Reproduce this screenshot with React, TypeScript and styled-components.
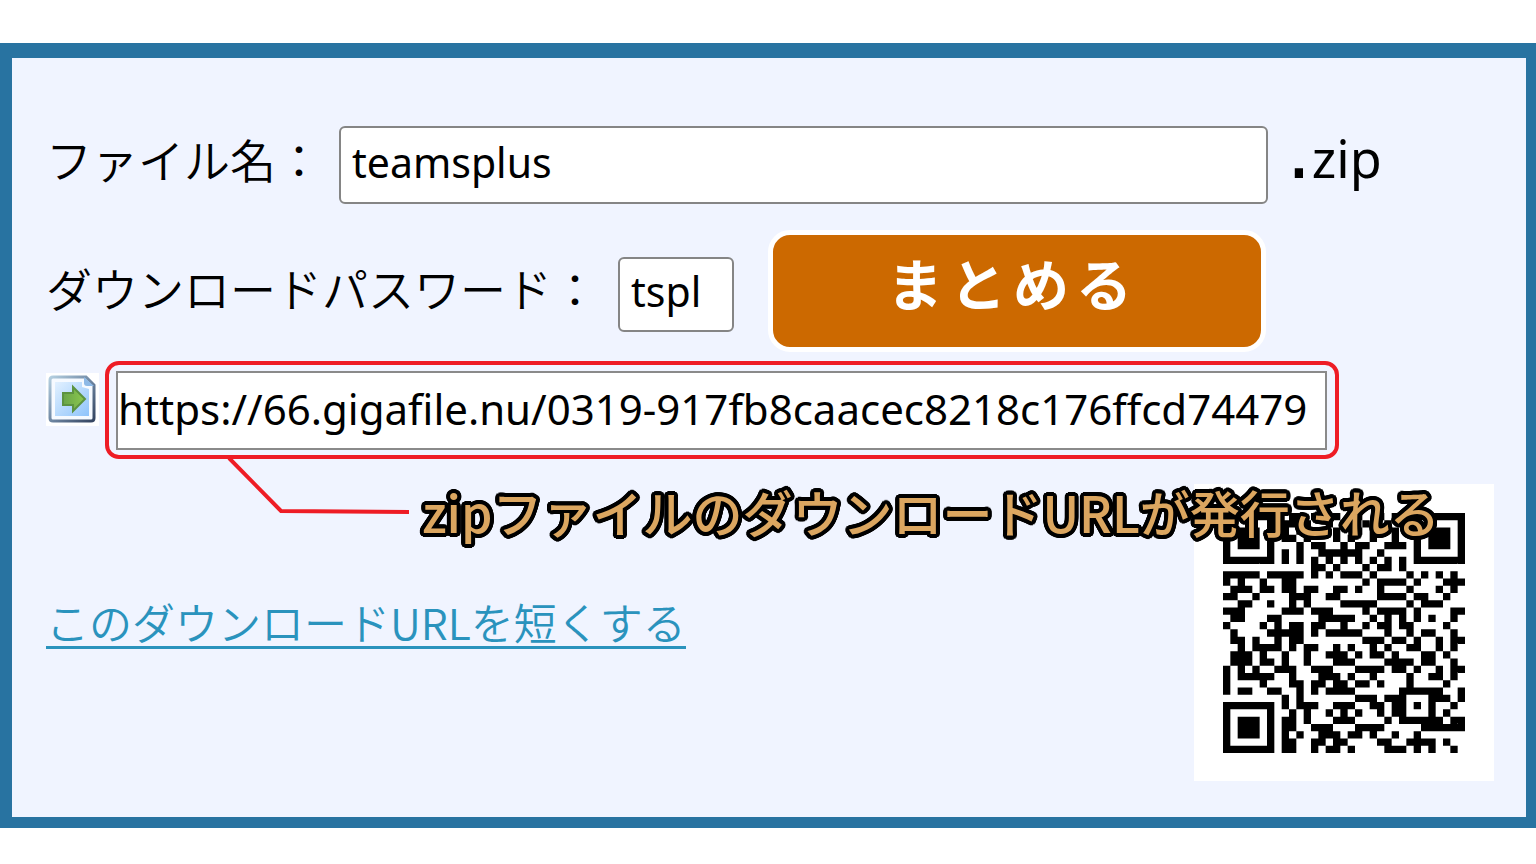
import React from "react";
import styled, { createGlobalStyle } from "styled-components";

const GlobalStyle = createGlobalStyle`
  * { box-sizing: border-box; }
  body { margin: 0; background: #fff; }
`;

const labelFont = `"Noto Sans CJK JP", sans-serif`;
const fieldFont = `"Noto Sans", "Noto Sans CJK JP", sans-serif`;

const Page = styled.main`
  padding: 43px 0 36px;
  font-family: ${labelFont};
  color: #000;
`;

const Panel = styled.form`
  position: relative;
  min-height: 785px;
  padding: 68px 32px 34px 34px;
  border: solid #2873a1;
  border-width: 15px 10px 11px 12px;
  background: #f0f4ff;
`;

const Row = styled.div<{ $height: number; $top?: number }>`
  display: flex;
  align-items: center;
  height: ${(p) => p.$height}px;
  margin-top: ${(p) => p.$top ?? 0}px;
`;

const Field = styled.div<{ $top?: number }>`
  display: flex;
  align-items: center;
  padding-top: ${(p) => p.$top ?? 0}px;
`;

const Label = styled.label<{ $width: number }>`
  flex: none;
  width: ${(p) => p.$width}px;
  padding-bottom: 14px;
  font: 350 46px/60px ${labelFont};
  white-space: nowrap;
`;

const TextBox = styled.input<{ $width: number; $height: number }>`
  width: ${(p) => p.$width}px;
  height: ${(p) => p.$height}px;
  padding: 0 11px 6px;
  border: 2px solid #858585;
  border-radius: 6px;
  background: #fff;
  color: #000;
  font: 400 41px/60px ${fieldFont};
`;

const Extension = styled.span`
  padding: 0 0 12px 22px;
  font: 400 52px/60px ${fieldFont};
`;

const Dot = styled.b`
  margin-right: 4px;
  font-family: "DejaVu Sans Condensed", sans-serif;
  font-weight: 700;
`;

const SubmitButton = styled.button`
  width: 498px;
  height: 122px;
  margin-left: 34px;
  padding: 0 8px 18px 0;
  border: 5px solid #fff;
  border-radius: 22px;
  background: #cc6900;
  color: #fff;
  font: 700 56px/72px ${labelFont};
  letter-spacing: 7px;
`;

const CopyButton = styled.button`
  align-self: flex-start;
  width: 53px;
  height: 53px;
  margin: 12px 6px 0 0;
  padding: 0;
  border: 0;
  background: #fff;
  svg { display: block; }
`;

const Highlight = styled.div`
  width: 1234px;
  height: 98px;
  padding: 6px 8px 6px 7px;
  border: 4px solid #ee1c25;
  border-radius: 14px;
`;

const UrlBox = styled.input`
  display: block;
  width: 100%;
  height: 79px;
  padding: 0 0 4px;
  border: 2px solid #8a8a8a;
  border-radius: 0;
  background: #fff;
  color: #000;
  font: 400 42px/60px ${fieldFont};
`;

const Lower = styled.div`
  display: flex;
  justify-content: space-between;
  align-items: flex-start;
  margin-top: 25px;
`;

const ShortenLink = styled.a`
  margin-top: 112px;
  border-bottom: 3px solid #2a93bd;
  color: #2a93bd;
  font: 350 43px/50px ${labelFont};
  text-decoration: none;
  white-space: nowrap;
`;

const QrCard = styled.div`
  width: 300px;
  height: 297px;
  padding: 29px;
  background: #fff;
  svg { display: block; }
`;

const Leader = styled.svg`
  position: absolute;
  left: 214px;
  top: 400px;
`;

/* A ring of shadows gives the lettering a round-cornered outline. */
const outline = Array.from({ length: 24 }, (_, i) => {
  const a = (i * Math.PI) / 12;
  return `${(4 * Math.cos(a)).toFixed(2)}px ${(4 * Math.sin(a)).toFixed(2)}px 0 #000`;
}).join(", ");

const Callout = styled.p`
  position: absolute;
  left: 410px;
  top: 417px;
  margin: 0;
  color: #dba660;
  font: 500 50px/72px ${labelFont};
  white-space: nowrap;
  text-shadow: ${outline};
`;

const FINDER = [
  "#######", "#.....#", "#.###.#", "#.###.#", "#.###.#", "#.....#", "#######",
];

/* Dark columns of each row outside the three corner finder squares. */
const QR_ROWS: number[][] = [
  [9, 10, 12, 15, 17, 18, 21, 23],
  [8, 9, 11, 14, 16, 19, 22],
  [8, 10, 12, 13, 15, 18, 20, 23],
  [8, 9, 11, 15, 17, 20, 23],
  [10, 12, 13, 16, 18, 19, 22, 23, 24],
  [8, 10, 13, 14, 15, 16, 17, 18, 21],
  [8, 10, 12, 14, 16, 18, 20, 22, 24],
  [12, 13, 15, 19, 21, 22, 24],
  [0, 1, 2, 3, 4, 6, 7, 8, 9, 10, 12, 14, 16, 17, 18, 20, 25, 27, 29, 31],
  [0, 2, 5, 8, 9, 19, 21, 22, 23, 24, 26, 30, 31, 32],
  [1, 2, 3, 5, 6, 8, 9, 11, 12, 15, 16, 18, 21, 25, 29, 31],
  [0, 1, 4, 9, 10, 11, 14, 15, 21, 22, 23, 24, 26, 27, 30],
  [2, 3, 6, 9, 11, 16, 17, 18, 19, 20, 25, 27, 28, 29],
  [0, 1, 2, 8, 9, 10, 12, 13, 14, 19, 21, 22, 23, 24, 26, 31, 32],
  [1, 2, 6, 7, 13, 14, 15, 16, 17, 20, 22, 24, 26, 28, 31],
  [0, 5, 7, 9, 10, 12, 13, 16, 19, 21, 22, 24, 25, 30],
  [1, 6, 7, 8, 9, 10, 12, 14, 15, 16, 17, 18, 22, 25, 27, 28, 31],
  [1, 2, 4, 7, 9, 10, 19, 20, 21, 23, 24, 26, 29, 31, 32],
  [2, 4, 5, 6, 7, 9, 11, 12, 15, 17, 20, 22, 25, 26, 29, 31],
  [1, 2, 3, 5, 8, 11, 14, 15, 16, 18, 20, 21, 23, 27, 28, 30],
  [1, 2, 3, 5, 6, 8, 11, 15, 16, 17, 22, 23, 24, 25, 27, 28, 31],
  [0, 2, 4, 7, 8, 9, 12, 13, 14, 18, 19, 20, 21, 23, 24, 26, 29, 31, 32],
  [0, 2, 3, 4, 5, 6, 9, 13, 14, 15, 17, 20, 25, 28, 29, 31],
  [0, 5, 9, 10, 12, 13, 15, 16, 18, 19, 21, 25, 30],
  [0, 2, 3, 6, 7, 10, 12, 14, 15, 16, 17, 24, 25, 26, 27, 28, 29, 32],
  [8, 10, 18, 19, 20, 22, 23, 24, 28, 29, 30, 32],
  [8, 10, 11, 12, 15, 16, 17, 20, 21, 23, 24, 26, 28, 31],
  [9, 11, 14, 16, 18, 21, 23, 24, 28, 30],
  [8, 9, 11, 15, 16, 17, 22, 24, 25, 26, 27, 28, 29, 31, 32],
  [8, 9, 12, 13, 14, 18, 19, 20, 21, 27, 28, 29, 30, 31, 32],
  [8, 10, 13, 14, 15, 17, 18, 20, 23, 26],
  [8, 9, 12, 13, 15, 16, 21, 22, 25, 26, 27, 28, 30],
  [8, 9, 12, 14, 15, 17, 22, 23, 24, 26, 28, 31],
];

const cell = (x: number, y: number) => `M${x} ${y}h1v1h-1z`;

const qrPath = [
  ...QR_ROWS.flatMap((cols, y) => cols.map((x) => cell(x, y))),
  ...[[0, 0], [26, 0], [0, 26]].flatMap(([ox, oy]) =>
    FINDER.flatMap((line, y) =>
      [...line].map((c, x) => (c === "#" ? cell(ox + x, oy + y) : ""))
    )
  ),
].join("");

const QrCode = () => (
  <svg width="242" height="240" viewBox="0 0 33 33" preserveAspectRatio="none" role="img" aria-label="QR">
    <path d={qrPath} fill="#000" />
  </svg>
);

const CopyIcon = () => (
  <svg width="53" height="53" viewBox="0 0 53 53" aria-hidden="true">
    <defs>
      <linearGradient id="frame" x1="0" y1="0" x2="1" y2="1">
        <stop offset="0" stopColor="#b4cfe0" />
        <stop offset="0.5" stopColor="#6f87a3" />
        <stop offset="1" stopColor="#33435f" />
      </linearGradient>
      <linearGradient id="sheet" x1="0" y1="0" x2="1" y2="1">
        <stop offset="0" stopColor="#e2f1ff" />
        <stop offset="1" stopColor="#8fc4fb" />
      </linearGradient>
      <linearGradient id="arrow" x1="0" y1="0" x2="1" y2="0">
        <stop offset="0" stopColor="#69a548" />
        <stop offset="1" stopColor="#8cc84e" />
      </linearGradient>
    </defs>
    <path d="M7 4H40L48 12V45Q48 48 45 48H7Q4 48 4 45V7Q4 4 7 4Z" fill="#f6faff" stroke="url(#frame)" strokeWidth="3" />
    <path d="M9 9H36V14L43 16V43H9Z" fill="url(#sheet)" />
    <path d="M38 4L48 13H41Q38 13 38 10Z" fill="#8db9e6" />
    <path d="M17 20H27V14L39 26L27 38V32H17Z" fill="url(#arrow)" stroke="#5c9340" strokeWidth="2" />
  </svg>
);

export default function App() {
  return (
    <>
      <GlobalStyle />
      <Page>
        <Panel onSubmit={(e) => e.preventDefault()}>
          <Row $height={78}>
            <Field>
              <Label htmlFor="file" $width={293}>ファイル名：</Label>
              <TextBox id="file" $width={929} $height={78} defaultValue="teamsplus" />
            </Field>
            <Extension><Dot>.</Dot>zip</Extension>
          </Row>
          <Row $height={122} $top={26}>
            <Field $top={6}>
              <Label htmlFor="pass" $width={572}>ダウンロードパスワード：</Label>
              <TextBox id="pass" $width={116} $height={75} defaultValue="tspl" />
            </Field>
            <SubmitButton type="submit">まとめる</SubmitButton>
          </Row>
          <Row $height={98} $top={9}>
            <CopyButton type="button" aria-label="URL"><CopyIcon /></CopyButton>
            <Highlight>
              <UrlBox readOnly aria-label="URL" value="https://66.gigafile.nu/0319-917fb8caacec8218c176ffcd74479" />
            </Highlight>
          </Row>
          <Lower>
            <ShortenLink href="#">このダウンロードURLを短くする</ShortenLink>
            <QrCard><QrCode /></QrCard>
          </Lower>
          <Leader width="184" height="58" viewBox="0 0 184 58" aria-hidden="true">
            <path d="M3 0L55 53L183 54" fill="none" stroke="#ee1c25" strokeWidth="4" />
          </Leader>
          <Callout>zipファイルのダウンロードURLが発行される</Callout>
        </Panel>
      </Page>
    </>
  );
}
